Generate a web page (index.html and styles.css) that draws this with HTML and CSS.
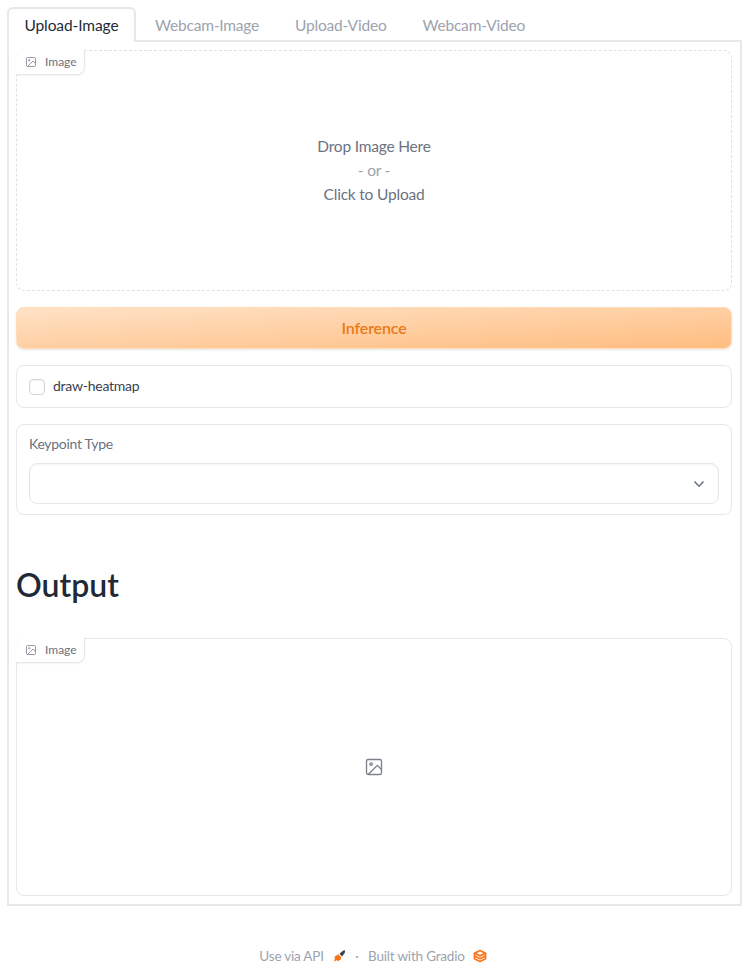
FILE: index.html
```html
<!DOCTYPE html>
<html lang="en">
<head>
    <meta charset="UTF-8">
    <meta name="viewport" content="width=device-width, initial-scale=1.0">
    <title>Gradio</title>
    <link rel="stylesheet" href="styles.css">
</head>
<body>
    <div class="tabs">
        <button class="tab selected">Upload-Image</button>
        <button class="tab">Webcam-Image</button>
        <button class="tab">Upload-Video</button>
        <button class="tab">Webcam-Video</button>
    </div>
    <div class="tab-panel">
        <div class="image-block dashed upload">
            <div class="image-label">
                <svg class="label-icon" viewBox="0 0 24 24"><rect x="3" y="3" width="18" height="18" rx="2"/><circle cx="8.5" cy="8.5" r="1.5"/><path d="M21 15l-5-5L5 21"/></svg>
                <span>Image</span>
            </div>
            <div class="drop-text">
                <span>Drop Image Here</span>
                <span class="or">- or -</span>
                <span>Click to Upload</span>
            </div>
        </div>

        <button class="inference">Inference</button>

        <label class="block check-block">
            <span class="checkbox"></span>
            <span>draw-heatmap</span>
        </label>

        <div class="block select-block">
            <div class="select-label">Keypoint Type</div>
            <div class="select-box">
                <svg class="chevron" viewBox="0 0 18 18"><path d="M4.5 6.500L9 11.200l4.500-4.700"/></svg>
            </div>
        </div>

        <h1>Output</h1>

        <div class="image-block output">
            <div class="image-label">
                <svg class="label-icon" viewBox="0 0 24 24"><rect x="3" y="3" width="18" height="18" rx="2"/><circle cx="8.5" cy="8.5" r="1.5"/><path d="M21 15l-5-5L5 21"/></svg>
                <span>Image</span>
            </div>
            <svg class="empty-icon" viewBox="0 0 24 24"><rect x="3" y="3" width="18" height="18" rx="2"/><circle cx="8.5" cy="8.5" r="1.5"/><path d="M21 15l-5-5L5 21"/></svg>
        </div>
    </div>

    <footer>
        <span>Use via API</span>
        <svg class="rocket" viewBox="0 0 16 16">
            <path class="rocket-tip" d="M8.500 5.500l4-3.500 2.500-.5-.5 3-3 4z"/>
            <path class="rocket-body" d="M7 6l3.500 3.500-.5 2.500-3.500 2-1-1.500-3.500 2 1.500-4-1-1.500z"/>
        </svg>
        <span class="dot">·</span>
        <span>Built with Gradio</span>
        <svg class="logo" viewBox="0 0 14 14">
            <path d="M7 1.500l5.500 2.700L7 6.900 1.500 4.200z"/>
            <path d="M1.500 4.200v5.600L7 12.500l5.500-2.700V4.200"/>
            <path d="M1.500 7L7 9.700 12.500 7"/>
        </svg>
    </footer>
</body>
</html>
```

FILE: styles.css
```css
body {
    font-family: 'Lato', 'Noto Sans', sans-serif;
    margin: 0;
    padding: 7px 9px 0 7px;
    background: white;
    color: #27272a;
}

.tabs {
    display: flex;
    height: 33px;
}

.tab {
    font-family: inherit;
    font-size: 15.5px;
    letter-spacing: -0.2px;
    padding: 2px 18px 0;
    background: none;
    border: none;
    color: #9ca3af;
}

.tab.selected {
    width: 129px;
    height: 35px;
    margin-right: 1px;
    padding: 0 0 2px;
    letter-spacing: -0.1px;
    color: #1f2937;
    background: white;
    border: 2px solid #e5e7eb;
    border-bottom: none;
    border-radius: 6px 6px 0 0;
    position: relative;
    z-index: 1;
}

.tab-panel {
    border: 2px solid #e5e7eb;
    padding: 8px 8px 8px 7px;
    display: flex;
    flex-direction: column;
    gap: 16px;
    height: 846px;
}

.image-block {
    position: relative;
    border: 1px solid #e5e7eb;
    border-radius: 8px;
}

.dashed {
    border: 1px dashed #dfe1e6;
}

.upload {
    height: 239px;
    display: flex;
    align-items: center;
    justify-content: center;
}

.image-label {
    position: absolute;
    top: -1px;
    left: -1px;
    display: flex;
    align-items: center;
    gap: 8px;
    height: 25px;
    padding: 0 7px 1px 9px;
    box-sizing: border-box;
    font-size: 12px;
    color: #6b7280;
    background: white;
    border: 1px solid #e5e7eb;
    border-top: none;
    border-left: none;
    border-radius: 8px 0 8px 0;
    box-shadow: 0 1px 2px rgba(0, 0, 0, 0.05);
}

.label-icon {
    width: 12px;
    height: 12px;
    fill: none;
    stroke: #8b909a;
    stroke-width: 1.8;
}

.drop-text {
    display: flex;
    flex-direction: column;
    align-items: center;
    padding-bottom: 2px;
    font-size: 15.5px;
    letter-spacing: -0.2px;
    line-height: 24px;
    color: #6b7280;
}

.or {
    color: #9ca3af;
}

.inference {
    height: 42px;
    padding-bottom: 3px;
    font-family: inherit;
    font-size: 16px;
    letter-spacing: -0.15px;
    font-weight: 600;
    color: #ea7a17;
    background: linear-gradient(to bottom right, #ffe2c6, #ffbd80);
    border: 1px solid #ffdcba;
    border-radius: 8px;
    box-shadow: 0 1px 2px rgba(0, 0, 0, 0.1);
}

.block {
    border: 1px solid #e5e7eb;
    border-radius: 8px;
}

.check-block {
    display: flex;
    align-items: center;
    gap: 8px;
    height: 41px;
    padding: 0 12px;
    font-size: 14px;
    letter-spacing: -0.25px;
    color: #374151;
}

.check-block span:last-child {
    margin-bottom: 2px;
}

.checkbox {
    width: 14px;
    height: 14px;
    border: 1px solid #d1d5db;
    border-radius: 4px;
    box-shadow: inset 0 1px 2px rgba(0, 0, 0, 0.05);
}

.select-block {
    padding: 11px 12px 12px;
    height: 66px;
}

.select-label {
    font-size: 14px;
    letter-spacing: -0.3px;
    line-height: 16px;
    color: #6b7280;
    margin-bottom: 11px;
}

.select-box {
    height: 39px;
    border: 1px solid #e5e7eb;
    border-radius: 8px;
    display: flex;
    align-items: center;
    justify-content: flex-end;
    padding-right: 10px;
    box-shadow: inset 0 1px 2px rgba(0, 0, 0, 0.05);
}

.chevron {
    width: 18px;
    height: 18px;
    fill: none;
    stroke: #6b7280;
    stroke-width: 1.6;
}

h1 {
    font-size: 32px;
    font-weight: 600;
    color: #1f2937;
    margin: 33px 0 16px;
    line-height: 42px;
}

.output {
    height: 256px;
    display: flex;
    align-items: center;
    justify-content: center;
}

.empty-icon {
    width: 20px;
    height: 20px;
    fill: none;
    stroke: #7b808a;
    stroke-width: 1.6;
}

footer {
    display: flex;
    align-items: center;
    justify-content: center;
    gap: 8px;
    margin-top: 42px;
    padding-right: 3px;
    font-size: 13.5px;
    letter-spacing: -0.2px;
    color: #9ca3af;
}

.rocket {
    width: 14px;
    height: 14px;
}

.rocket-tip {
    fill: #374151;
}

.rocket-body {
    fill: #f97316;
}

.dot {
    margin: 0 1.5px;
}

.logo {
    width: 14px;
    height: 14px;
    fill: none;
    stroke: #f97316;
    stroke-width: 1.8;
    stroke-linejoin: round;
}
```
